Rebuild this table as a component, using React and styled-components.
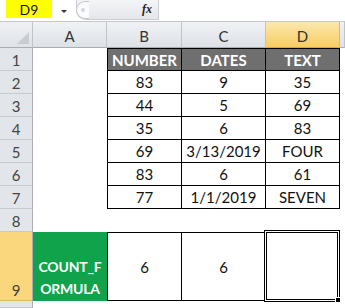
import React from "react";
import styled, { createGlobalStyle } from "styled-components";

const Global = createGlobalStyle`
  html, body { margin: 0; padding: 0; background: #fff; }
  body { width: 345px; height: 308px; overflow: hidden; font-family: Lato, "Open Sans", sans-serif; }
`;

const Page = styled.div`
  width: 345px;
  height: 308px;
  display: flex;
  flex-direction: column;
  background: #fff;
`;

const FormulaBar = styled.div`
  height: 21px;
  display: flex;
  align-items: flex-start;
  border-bottom: 1px solid #c3c7cc;
  background: #fff;
`;

const NameBox = styled.div`
  margin-left: 6px;
  width: 46px;
  height: 18px;
  background: #ffff00;
  display: flex;
  align-items: center;
  justify-content: center;
  font-size: 14px;
  color: #111;
`;

const DropArrow = styled.div`
  margin: 10px 0 0 9px;
  width: 0;
  height: 0;
  border-left: 3px solid transparent;
  border-right: 3px solid transparent;
  border-top: 3px solid #333;
`;

const FxBox = styled.div`
  margin-left: 9px;
  width: 83px;
  height: 20px;
  box-sizing: border-box;
  background: linear-gradient(#f4f5f7, #e4e6ea);
  border: 1px solid #c9ccd1;
  border-top: none;
  border-radius: 0 0 0 10px;
  display: flex;
  align-items: center;
`;

const Cap = styled.div`
  width: 13px;
  height: 18px;
  margin-left: -1px;
  box-sizing: border-box;
  border: 1px solid #c2c5ca;
  border-radius: 9px 0 0 9px;
  border-right: none;
  background: #fafbfc;
  display: flex;
  align-items: center;
  justify-content: center;
  &::after {
    content: "";
    width: 4px;
    height: 4px;
    border-radius: 50%;
    background: #d3d6da;
  }
`;

const FxLabel = styled.span`
  margin-left: auto;
  margin-right: 6px;
  font-family: "Liberation Serif", serif;
  font-style: italic;
  font-weight: bold;
  font-size: 12px;
  color: #222;
`;

const FormulaInput = styled.div`
  flex: 1;
  height: 20px;
  background: #fff;
`;

const Sheet = styled.div`
  flex: 1;
  display: grid;
  grid-template-columns: 33px 74px 75px 84px 74px 1fr;
  grid-template-rows: 26px repeat(8, 23px) 69px 1fr;
  background: #fff;
  overflow: hidden;
`;

const Corner = styled.div`
  background: linear-gradient(#eef0f3, #dfe3e8);
  border-right: 1px solid #c0c4c9;
  border-bottom: 1px solid #a9aeb4;
  position: relative;
  &::after {
    content: "";
    position: absolute;
    right: 3px;
    bottom: 3px;
    width: 0;
    height: 0;
    border-left: 12px solid transparent;
    border-bottom: 12px solid #c9ccd1;
  }
`;

const ColHeader = styled.div`
  background: ${(p) =>
    p.$selected
      ? "linear-gradient(#fbe7ae, #f8cd62)"
      : "linear-gradient(#f0f2f5, #dde1e6)"};
  border-right: 1px solid ${(p) => (p.$selected ? "#e2b858" : "#c0c4c9")};
  border-bottom: 1px solid ${(p) => (p.$selected ? "#d9a93e" : "#a9aeb4")};
  display: flex;
  align-items: center;
  justify-content: center;
  font-size: 15px;
  color: #333;
  padding-top: 2px;
  box-sizing: border-box;
`;

const RowHeader = styled.div`
  background: ${(p) => (p.$selected ? "#fad67d" : "#e2e6eb")};
  border-right: 1px solid #a9aeb4;
  border-bottom: 1px solid ${(p) => (p.$selected ? "#e2b858" : "#c6cacf")};
  display: flex;
  align-items: flex-end;
  justify-content: center;
  font-size: 15px;
  line-height: 18px;
  color: #444;
  padding-bottom: 1px;
  box-sizing: border-box;
`;

const Cell = styled.div`
  box-sizing: border-box;
  display: flex;
  align-items: center;
  justify-content: center;
  text-align: center;
  font-size: 15px;
  color: #111;
  background: ${(p) =>
    p.$kind === "head" ? "#6f6f6f" : p.$kind === "green" ? "#10a34b" : "#fff"};
  ${(p) => (p.$kind === "head" || p.$kind === "green") && "color: #fff; font-weight: bold;"}
  ${(p) => p.$boxed && "border-right: 1px solid #000; border-bottom: 1px solid #000;"}
  ${(p) => p.$top && "border-top: 1px solid #000;"}
  ${(p) => p.$left && "border-left: 1px solid #000;"}
`;

const LabelCell = styled(Cell)`
  align-items: flex-end;
  word-break: break-all;
  font-size: 14px;
  letter-spacing: -0.2px;
  line-height: 22px;
  padding: 0 2px 1px;
`;

const ActiveCell = styled.div`
  box-sizing: border-box;
  border: 3px double #000;
  margin: -2px 0 -1px -2px;
  background: #fff;
  position: relative;
  &::after {
    content: "";
    position: absolute;
    right: -4px;
    bottom: -4px;
    width: 4px;
    height: 4px;
    background: #000;
    border: 1px solid #fff;
  }
`;

const columns = ["A", "B", "C", "D", ""];
const tableRows = [
  ["NUMBER", "DATES", "TEXT"],
  ["83", "9", "35"],
  ["44", "5", "69"],
  ["35", "6", "83"],
  ["69", "3/13/2019", "FOUR"],
  ["83", "6", "61"],
  ["77", "1/1/2019", "SEVEN"],
];

export default function App() {
  return (
    <Page>
      <Global />
      <FormulaBar>
        <NameBox>D9</NameBox>
        <DropArrow />
        <FxBox>
          <Cap />
          <FxLabel>fx</FxLabel>
        </FxBox>
        <FormulaInput />
      </FormulaBar>
      <Sheet>
        <Corner />
        {columns.map((c, i) => (
          <ColHeader key={i} $selected={c === "D"}>
            {c}
          </ColHeader>
        ))}
        {tableRows.map((row, r) => (
          <React.Fragment key={r}>
            <RowHeader>{r + 1}</RowHeader>
            <Cell />
            {row.map((v, ci) => (
              <Cell
                key={ci}
                $kind={r === 0 ? "head" : "plain"}
                $boxed
                $top={r === 0}
                $left={ci === 0}
              >
                {v}
              </Cell>
            ))}
            <Cell />
          </React.Fragment>
        ))}
        <RowHeader>8</RowHeader>
        <Cell />
        <Cell />
        <Cell />
        <Cell />
        <Cell />
        <RowHeader $selected>9</RowHeader>
        <LabelCell $kind="green">COUNT_FORMULA</LabelCell>
        <Cell $boxed $top $left>6</Cell>
        <Cell $boxed $top>6</Cell>
        <ActiveCell />
        <Cell />
        <RowHeader />
        <Cell />
        <Cell />
        <Cell />
        <Cell />
        <Cell />
      </Sheet>
    </Page>
  );
}
